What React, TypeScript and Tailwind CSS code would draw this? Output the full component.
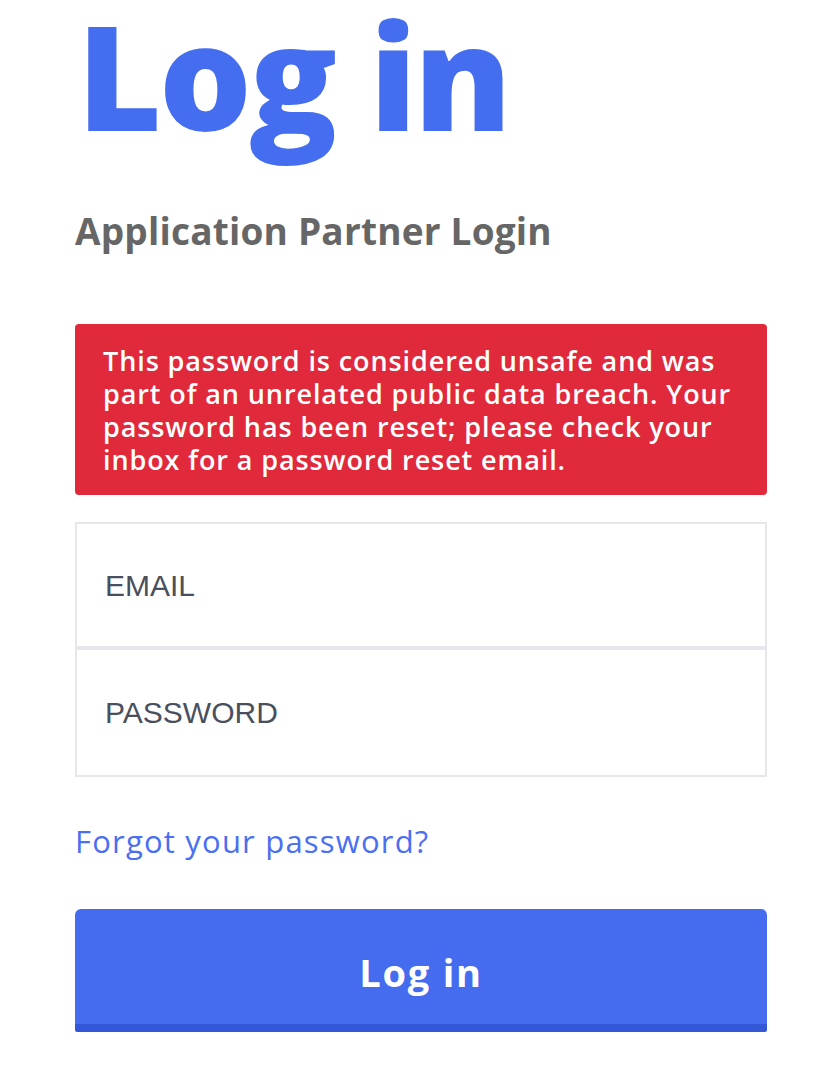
export default function App() {
  return (
    <div className="min-h-screen bg-white font-['Open_Sans',sans-serif]">
      <div className="ml-[75px] w-[692px]">
        <h1 className="ml-[2px] h-[150px] text-[146px] font-extrabold leading-[150px] tracking-[-3px] text-[#446df0]">Log in</h1>
        <h2 className="mt-[59px] text-[37px] font-bold leading-[44px] tracking-[0.2px] text-[#666666]">Application Partner Login</h2>

        <div className="mt-[71px] rounded-[4px] bg-[#e0293b] pb-[19px] pl-[28px] pr-[20px] pt-[20px] text-[27px] font-semibold leading-[33px] tracking-[0.9px] text-white">
          This password is considered unsafe and was part of an unrelated public data breach. Your password has been reset; please check your inbox for a password reset email.
        </div>

        <div className="mt-[27px] border-2 border-[#e6e7eb]">
          <div className="flex h-[126px] items-center border-b-4 border-[#e6e7eb] px-[28px] font-['Liberation_Sans',sans-serif] text-[30px] text-[#4a4f5e]">
            EMAIL
          </div>
          <div className="flex h-[125px] items-center px-[28px] font-['Liberation_Sans',sans-serif] text-[30px] text-[#4a4f5e]">
            PASSWORD
          </div>
        </div>

        <a className="mt-[44px] block text-[31px] leading-[40px] tracking-[1.2px] text-[#4a6ff0]">Forgot your password?</a>

        <button className="mt-[48px] flex h-[123px] w-full items-center justify-center rounded-t-[6px] rounded-b-[2px] border-b-[8px] border-[#3357d6] bg-[#456cee] pt-[12px] text-[38px] font-bold tracking-[1.8px] text-white">
          Log in
        </button>
      </div>
    </div>
  );
}
